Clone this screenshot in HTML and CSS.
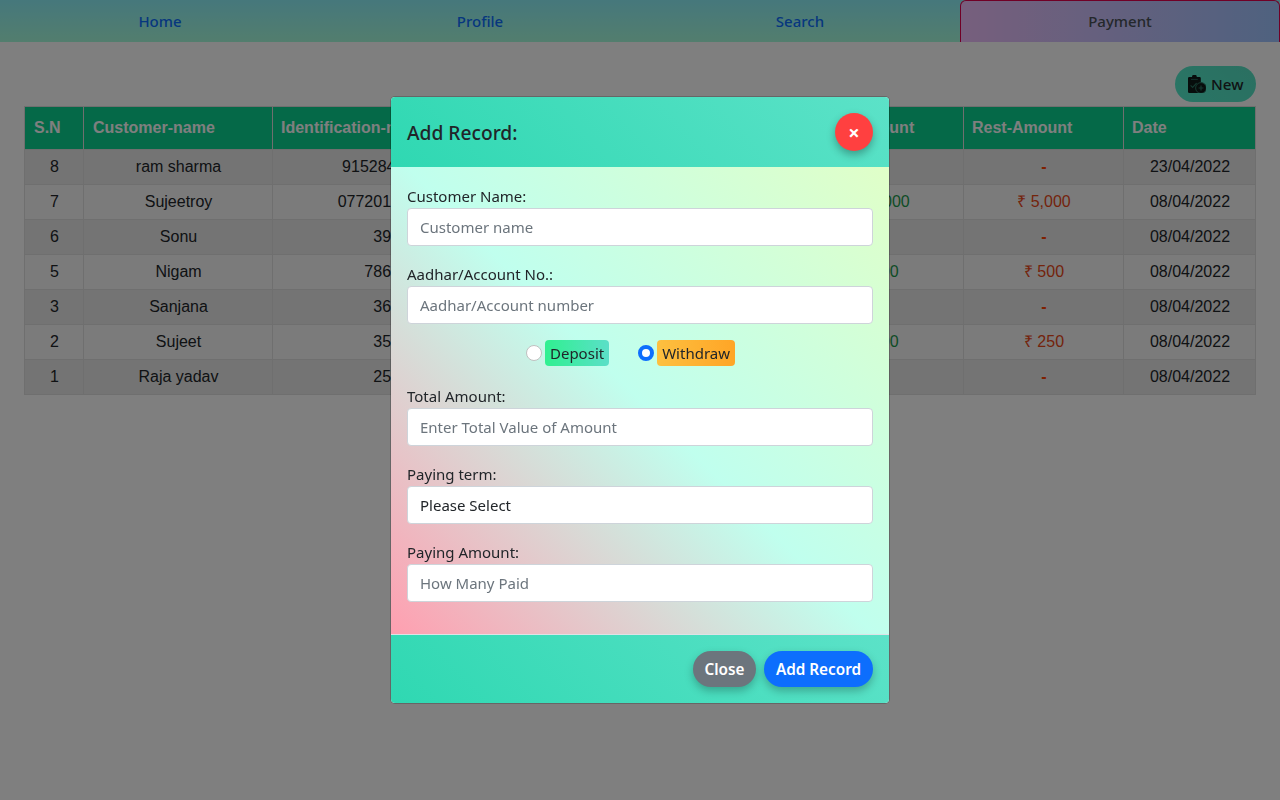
FILE: index.html
```html
<!doctype html>
<html>
<head>
    <meta charset="utf-8" />
    <meta name="viewport" content="width=device-width, initial-scale=1" />
    <title>Payment</title>
    <link rel="stylesheet" href="styles.css">
</head>
<body>
    <nav class="Tabs">
        <a class="Tab">Home</a>
        <a class="Tab">Profile</a>
        <a class="Tab">Search</a>
        <a class="Tab _Active">Payment</a>
    </nav>
    <main class="Page">
        <div class="Toolbar">
            <button class="NewBtn" type="button">
                <svg class="NewBtn_icon" viewBox="0 0 18 18" width="18" height="18">
                    <path d="M1.200 2H4a2.400 2.400 0 0 1 4.800 0h2.800a1.200 1.200 0 0 1 1.200 1.200V18H1.200A1.200 1.200 0 0 1 0 16.800V3.200A1.200 1.200 0 0 1 1.200 2Z" fill="#0f1a18"/>
                    <path d="M3 4.400h6.800" stroke="#2a7362" stroke-width=".8"/>
                    <path d="M2.600 10.400l2 2 4-4.200" fill="none" stroke="#2a7362" stroke-width="1.100"/>
                    <circle cx="13" cy="13" r="5.400" fill="#0f1a18" stroke="#2a7362" stroke-width="1"/>
                    <path d="M13 10.600v4.800M10.600 13h4.800" stroke="#2a7362" stroke-width="1.200"/>
                </svg>
                New
            </button>
        </div>
        <table class="Records">
            <colgroup>
                <col class="_sn"><col class="_name"><col class="_id"><col class="_type"><col class="_total"><col class="_paid"><col class="_rest"><col class="_date">
            </colgroup>
            <thead>
                <tr>
                    <th>S.N</th>
                    <th>Customer-name</th>
                    <th>Identification-no</th>
                    <th></th>
                    <th></th>
                    <th>Paying-Amount</th>
                    <th>Rest-Amount</th>
                    <th>Date</th>
                </tr>
            </thead>
            <tbody>
                <tr><td>8</td><td>ram sharma</td><td>915284000000</td><td></td><td></td><td class="_green"></td><td class="_red _dash">-</td><td>23/04/2022</td></tr>
                <tr><td>7</td><td>Sujeetroy</td><td>0772010000000</td><td></td><td></td><td class="_green">₹ 10,000</td><td class="_red">₹ 5,000</td><td>08/04/2022</td></tr>
                <tr><td>6</td><td>Sonu</td><td>39000</td><td></td><td></td><td class="_green"></td><td class="_red _dash">-</td><td>08/04/2022</td></tr>
                <tr><td>5</td><td>Nigam</td><td>7860000</td><td></td><td></td><td class="_green">₹ 500</td><td class="_red">₹ 500</td><td>08/04/2022</td></tr>
                <tr><td>3</td><td>Sanjana</td><td>36000</td><td></td><td></td><td class="_green"></td><td class="_red _dash">-</td><td>08/04/2022</td></tr>
                <tr><td>2</td><td>Sujeet</td><td>35000</td><td></td><td></td><td class="_green">₹ 500</td><td class="_red">₹ 250</td><td>08/04/2022</td></tr>
                <tr><td>1</td><td>Raja yadav</td><td>25000</td><td></td><td></td><td class="_green"></td><td class="_red _dash">-</td><td>08/04/2022</td></tr>
            </tbody>
        </table>
    </main>

    <div class="Backdrop">
        <form class="Modal">
            <header class="Modal_head">
                <h2 class="Modal_title">Add Record:</h2>
                <button class="CloseX" type="button">×</button>
            </header>
            <div class="Modal_body">
                <div class="Field">
                    <label for="name_el">Customer Name:</label>
                    <input id="name_el" class="_Input" type="text" placeholder="Customer name">
                </div>
                <div class="Field">
                    <label for="acc_el">Aadhar/Account No.:</label>
                    <input id="acc_el" class="_Input" type="text" placeholder="Aadhar/Account number">
                </div>
                <div class="Radios">
                    <label class="Radio"><input type="radio" name="kind"><span class="Pill _Deposit">Deposit</span></label>
                    <label class="Radio"><input type="radio" name="kind" checked><span class="Pill _Withdraw">Withdraw</span></label>
                </div>
                <div class="Field">
                    <label for="total_el">Total Amount:</label>
                    <input id="total_el" class="_Input" type="text" placeholder="Enter Total Value of Amount">
                </div>
                <div class="Field">
                    <label for="term_el">Paying term:</label>
                    <select id="term_el" class="_Input"><option>Please Select</option></select>
                </div>
                <div class="Field">
                    <label for="paid_el">Paying Amount:</label>
                    <input id="paid_el" class="_Input" type="text" placeholder="How Many Paid">
                </div>
            </div>
            <footer class="Modal_foot">
                <button class="Btn _Grey" type="button">Close</button>
                <button class="Btn _Blue" type="button">Add Record</button>
            </footer>
        </form>
    </div>
</body>
</html>
```

FILE: styles.css
```css
* {
    box-sizing: border-box;
}
body {
    margin: 0;
    background: #fff;
    color: #212529;
    font-family: "Noto Sans", "Open Sans", sans-serif;
    font-size: 15px;
    line-height: 24px;
}
button, input, select {
    font-family: inherit;
    font-size: inherit;
}

/* top tabs */
.Tabs {
    display: flex;
    height: 42px;
    background: linear-gradient(to bottom, #8cf0f8, #a6fcdc);
}
.Tab {
    flex: 0 0 25%;
    text-align: center;
    line-height: 42px;
    color: #0d6efd;
    font-weight: 500;
}
.Tab._Active {
    color: #495057;
    background: linear-gradient(to right, #eebefa, #9ec4ff);
    border: 1px solid #e0004c;
    border-bottom: 0;
    border-radius: 6px 6px 0 0;
    line-height: 40px;
}

.Page {
    padding: 24px 24px 0;
}
.Toolbar {
    display: flex;
    justify-content: flex-end;
    margin-bottom: 4px;
}
.NewBtn {
    display: flex;
    align-items: center;
    gap: 5px;
    width: 81px;
    height: 36px;
    padding: 0 0 0 13px;
    border: 0;
    border-radius: 18px;
    background: linear-gradient(45deg, #52eccb, #56dfc2);
    color: #212529;
    font-size: 15.200px;
    font-weight: 500;
}

/* records table */
.Records {
    width: 1231px;
    border-collapse: collapse;
    table-layout: fixed;
    font-family: "Liberation Sans", Arial, sans-serif;
    font-size: 16px;
    line-height: 18px;
}
.Records ._sn { width: 59px; }
.Records ._name { width: 189px; }
.Records ._id { width: 245px; }
.Records ._type { width: 130px; }
.Records ._total { width: 140px; }
.Records ._paid { width: 176px; }
.Records ._rest { width: 160px; }
.Records ._date { width: 132px; }
.Records th, .Records td {
    border: 1px solid #dedede;
    padding: 8px 8px 8px 9px;
    white-space: nowrap;
    overflow: hidden;
}
.Records th {
    height: 43px;
    text-align: left;
    background: #0ad290;
    color: #fff;
}
.Records th:nth-child(n+3) {
    padding-left: 8px;
}
.Records td {
    text-align: center;
    height: 35px;
}
.Records tbody tr:nth-child(odd) {
    background: #e9e9e9;
}
.Records tbody tr:nth-child(even) {
    background: #f6f6f6;
}
.Records td._green {
    padding-left: 14px;
    color: #1c9a4c;
}
.Records ._red {
    color: #e84818;
}
.Records ._dash {
    font-weight: 700;
    color: #ff4000;
}

/* modal */
.Backdrop {
    position: fixed;
    inset: 0;
    display: flex;
    align-items: center;
    justify-content: center;
    background: rgba(0, 0, 0, .5);
}
.Modal {
    width: 500px;
    border: 1px solid rgba(0, 0, 0, .2);
    border-radius: 5px;
    overflow: hidden;
    display: flex;
    flex-direction: column;
    background: #fff;
    background-clip: padding-box;
}
.Modal_head {
    display: flex;
    align-items: center;
    justify-content: space-between;
    height: 70px;
    padding: 0 16px;
    background: linear-gradient(45deg, #2fd8b2, #5ce2c8);
}
.Modal_title {
    margin: 2px 0 0;
    font-size: 19.200px;
    font-weight: 500;
}
.CloseX {
    width: 38px;
    height: 38px;
    padding: 0;
    border: 0;
    border-radius: 50%;
    background: #ff4040;
    color: #fff;
    font-size: 20px;
    font-weight: 700;
    box-shadow: 0 4px 8px rgba(0, 0, 0, .3);
}
.Modal_body {
    height: 467px;
    padding: 17px 16px 0;
    background: linear-gradient(45deg, #ff9fb0 0%, #c0ffee 50%, #e0ffc8 100%);
}
.Field {
    margin-bottom: 16px;
}
.Field label {
    display: block;
    height: 24px;
}
.Field ._Input {
    display: block;
    width: 100%;
    height: 38px;
    padding: 0 12px;
    border: 1px solid #ced4da;
    border-radius: 4px;
    background: #fff;
    color: #212529;
    appearance: none;
}
.Field ._Input::placeholder {
    color: #6c757d;
}
.Radios {
    display: flex;
    justify-content: center;
    gap: 29px;
    margin-bottom: 18px;
    padding-right: 19px;
}
.Radio {
    display: flex;
    align-items: center;
    gap: 3px;
}
.Radio input {
    width: 16px;
    height: 16px;
    margin: 0;
    appearance: none;
    background: #fff;
    border: 1px solid #bfbfbf;
    border-radius: 50%;
}
.Radio input:checked {
    border: 4px solid #0d6efd;
}
.Pill {
    height: 26px;
    padding: 0 5px;
    border-radius: 4px;
    line-height: 26px;
}
.Pill._Deposit {
    background: linear-gradient(to right, #30f090, #5bdfc8);
}
.Pill._Withdraw {
    background: linear-gradient(to right, #fdc040, #ffa526);
}
.Modal_foot {
    display: flex;
    justify-content: flex-end;
    gap: 8px;
    height: 69px;
    padding: 16px 16px 0 0;
    border-top: 1px solid #dee2e6;
    background: linear-gradient(45deg, #2fd8b2, #5ce2c8);
}
.Btn {
    height: 36px;
    padding: 0;
    border: 0;
    border-radius: 18px;
    color: #fff;
    font-size: 15.300px;
    font-weight: 600;
    box-shadow: 0 4px 8px rgba(0, 0, 0, .25);
}
.Btn._Grey {
    width: 63px;
    background: #6c757d;
}
.Btn._Blue {
    width: 109px;
    background: #0d6efd;
}
```
